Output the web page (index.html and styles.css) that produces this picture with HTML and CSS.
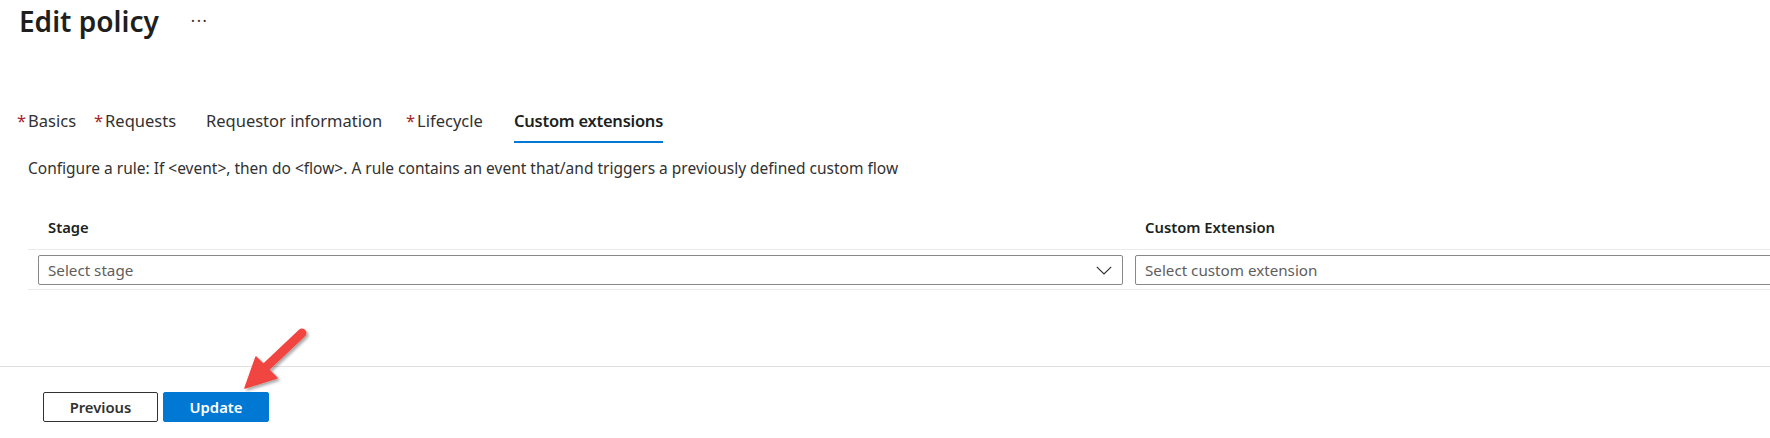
FILE: index.html
```html
<!DOCTYPE html>
<html lang="en">
<head>
<meta charset="utf-8">
<title>Edit policy</title>
<link rel="stylesheet" href="styles.css">
</head>
<body>
<div class="page">
  <header class="title-bar">
    <h1 class="title">Edit policy</h1>
    <span class="more">&middot;&middot;&middot;</span>
  </header>

  <nav class="tabs">
    <div class="tab tab-basics"><span class="req">*</span>Basics</div>
    <div class="tab tab-requests"><span class="req">*</span>Requests</div>
    <div class="tab tab-requestor">Requestor information</div>
    <div class="tab tab-lifecycle"><span class="req">*</span>Lifecycle</div>
    <div class="tab tab-active">Custom extensions</div>
  </nav>

  <p class="desc">Configure a rule: If &lt;event&gt;, then do &lt;flow&gt;. A rule contains an event that/and triggers a previously defined custom flow</p>

  <div class="grid">
    <div class="grid-head">
      <div class="col">Stage</div>
      <div class="col">Custom Extension</div>
    </div>
    <div class="grid-row">
      <div class="cell cell-stage">
        <div class="select">
          <span class="placeholder">Select stage</span>
          <svg class="chev" width="16" height="9" viewBox="0 0 16 9"><path d="M0.8 0.8 L8 8 L15.2 0.8" fill="none" stroke="#323130" stroke-width="1.2"/></svg>
        </div>
      </div>
      <div class="cell cell-ext">
        <div class="select select-ext">
          <span class="placeholder">Select custom extension</span>
        </div>
      </div>
    </div>
  </div>

  <footer class="footer">
    <button class="btn btn-secondary">Previous</button>
    <button class="btn btn-primary">Update</button>
  </footer>

  <svg class="arrow" width="80" height="76" viewBox="0 0 80 76">
    <defs>
      <filter id="sh" x="-30%" y="-30%" width="160%" height="160%">
        <feDropShadow dx="2" dy="2" stdDeviation="1.6" flood-color="#000" flood-opacity="0.35"/>
      </filter>
    </defs>
    <g filter="url(#sh)">
      <line x1="67" y1="11" x2="30" y2="46" stroke="#f0453f" stroke-width="9" stroke-linecap="round"/>
      <polygon points="10,66 21,35 42,56" fill="#f0453f" stroke="#f0453f" stroke-width="1.5" stroke-linejoin="round"/>
    </g>
  </svg>
</div>
</body>
</html>
```

FILE: styles.css
```css
* { box-sizing: border-box; }

html, body {
  margin: 0;
  padding: 0;
  background: #ffffff;
}

body {
  font-family: "Segoe UI", "Noto Sans", "Open Sans", sans-serif;
  color: #323130;
  width: 1770px;
  height: 438px;
  overflow: hidden;
}

.page {
  position: relative;
  height: 438px;
  overflow: hidden;
}

/* ---------- title ---------- */
.title-bar {
  display: flex;
  align-items: flex-start;
  height: 42px;
  padding-left: 19px;
}

.title {
  margin: 0;
  font-size: 28px;
  font-weight: 600;
  line-height: 42px;
  color: #201f1e;
  white-space: nowrap;
}

.more {
  margin-left: 32px;
  font-size: 16px;
  letter-spacing: 1.6px;
  line-height: 42px;
  color: #323130;
}

/* ---------- tabs ---------- */
.tabs {
  display: flex;
  margin-top: 59px;
  padding-left: 17px;
  height: 42px;
}

.tab {
  font-size: 16.5px;
  line-height: 40px;
  color: #323130;
  white-space: nowrap;
  flex: none;
}

.tab-basics { width: 77px; }
.tab-requests { width: 112px; }
.tab-requestor { width: 200px; }
.tab-lifecycle { width: 108px; }

.req {
  color: #a4262c;
  margin-right: 2px;
}

.tab-active {
  font-weight: 600;
  letter-spacing: -0.25px;
  color: #201f1e;
  border-bottom: 2px solid #0078d4;
  height: 42px;
}

/* ---------- description ---------- */
.desc {
  margin: 15px 0 0 28px;
  font-size: 15.5px;
  line-height: 20px;
  color: #323130;
  white-space: nowrap;
}

/* ---------- grid ---------- */
.grid {
  margin: 27px 0 0 28px;
}

.grid-head,
.grid-row {
  display: grid;
  grid-template-columns: 1097px 700px;
}

.grid-head {
  height: 45px;
  border-bottom: 1px solid #edebe9;
}

.col {
  padding-left: 20px;
  font-size: 14.8px;
  font-weight: 600;
  line-height: 44px;
  color: #201f1e;
  white-space: nowrap;
}

.grid-row {
  height: 40px;
  border-bottom: 1px solid #edebe9;
  padding-top: 5px;
}

.cell-stage { padding: 0 2px 0 10px; }
.cell-ext { padding-left: 10px; }

.select {
  height: 30px;
  border: 1px solid #8a8886;
  border-radius: 2px;
  display: flex;
  align-items: center;
  justify-content: space-between;
  padding: 0 10px 0 9px;
  background: #fff;
}

.placeholder {
  font-size: 15.2px;
  color: #605e5c;
  white-space: nowrap;
}

.chev { display: block; }

/* ---------- footer ---------- */
.footer {
  margin-top: 76px;
  border-top: 1px solid #e1dfdd;
  padding: 25px 0 0 43px;
  display: flex;
  gap: 5px;
}

.btn {
  height: 30px;
  border-radius: 2px;
  font-family: inherit;
  font-size: 14.8px;
  font-weight: 600;
  padding: 0;
  line-height: 28px;
}

.btn-secondary {
  width: 115px;
  background: #fff;
  border: 1px solid #323130;
  color: #323130;
}

.btn-primary {
  width: 106px;
  background: #0078d4;
  border: 1px solid #0078d4;
  color: #fff;
}

/* ---------- annotation arrow (overlay) ---------- */
.arrow {
  position: absolute;
  left: 235px;
  top: 322px;
}
```
